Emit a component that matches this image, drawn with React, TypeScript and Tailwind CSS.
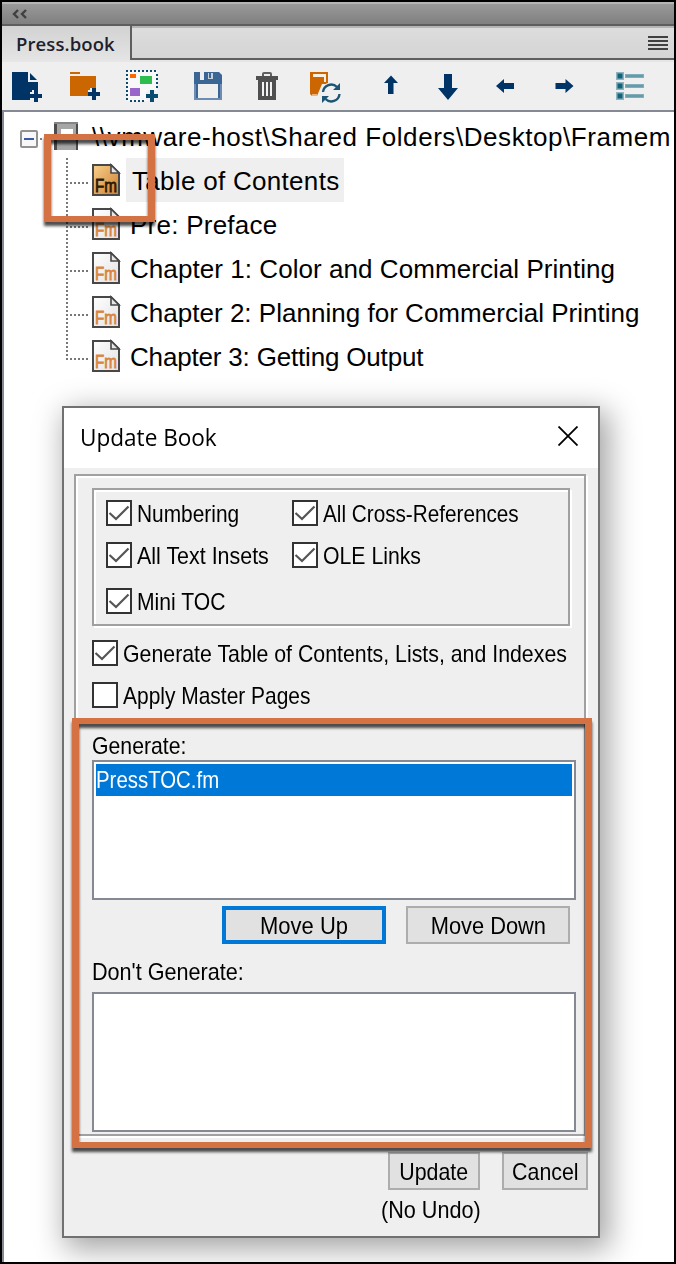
import { useState } from 'react';
import type { ReactNode } from 'react';
import clsx from 'clsx';

const chapters = [
  { title: 'Table of Contents', spacing: 'tracking-[0.3px]', selected: true },
  { title: 'Pre: Preface', spacing: 'tracking-[0.25px]' },
  { title: 'Chapter 1: Color and Commercial Printing', spacing: 'tracking-[0.06px]' },
  { title: 'Chapter 2: Planning for Commercial Printing', spacing: 'tracking-[0.02px]' },
  { title: 'Chapter 3: Getting Output', spacing: 'tracking-[-0.18px]' },
];

// Slots share one coordinate system, x is where the slot starts in the toolbar
function Tool({ x, width, children }: { x: number; width: number; children: ReactNode }) {
  return (
    <svg className="shrink-0" width={width} height={48} viewBox={`${x} 62 ${width} 48`}>
      {children}
    </svg>
  );
}

function Plus({ x, y, color }: { x: number; y: number; color: string }) {
  const d = `M${x - 6} ${y}h12M${x} ${y - 6}v12`;
  return (
    <>
      <path d={d} stroke="#efefef" strokeWidth="8" />
      <path d={d} stroke={color} strokeWidth="4" />
    </>
  );
}

function Toolbar() {
  return (
    <div className="flex h-12 bg-[#efefef]">
      <Tool x={4} width={52}>
        <path d="M12 72h16v10h10v18H12z" fill="#003366" />
        <path d="M30 73l7 7h-7z" fill="#003366" />
        <Plus x={36} y={96} color="#003366" />
      </Tool>
      <Tool x={56} width={57}>
        <path d="M70 72h10v2H70zM70 76h26v20H70z" fill="#cc6600" />
        <Plus x={94} y={94} color="#003366" />
      </Tool>
      <Tool x={113} width={63}>
        <rect x="127" y="71" width="30" height="30" fill="#f8f8f8" />
        <path d="M126 71h32M127 74v28M157 74v14M130 101h14" stroke="#0b4a70" strokeWidth="2" strokeDasharray="2 2" />
        <path d="M130 74h6v4h-6z" fill="#ff6600" />
        <path d="M140 76h12v8h-12z" fill="#2dbd4e" />
        <path d="M130 88h10v8h-10z" fill="#9966cc" />
        <Plus x={152} y={96} color="#0b4a70" />
      </Tool>
      <Tool x={176} width={63}>
        <path d="M194 72h25l3 3v25h-28z" fill="#3b6595" />
        <path d="M200 72h4v8h-4z" fill="#efefef" />
        <path d="M208 73h5v6h-5z" fill="#c5d0dd" />
        <path d="M209 73h2v5h-2z" fill="#3b6595" />
        <path d="M198 84h20v14h-20z" fill="#efefef" />
        <path d="M195 84v15h26V84" fill="none" stroke="#6c8cb1" strokeWidth="2" />
      </Tool>
      <Tool x={239} width={54}>
        <path d="M256 76h22v4h-2v20h-18V80h-2z" fill="#505050" />
        <path d="M263 76v-2q0-1 1-1h6q1 0 1 1v2" fill="none" stroke="#606060" strokeWidth="2" />
        <path d="M263 82v14M267 82v14M271 82v14" stroke="#f3f3f3" strokeWidth="2" />
      </Tool>
      <Tool x={293} width={57}>
        <path d="M310 72h18v12h-6l-5 12h-5l-2-2z" fill="#cc6600" />
        <path d="M313 74h13v8h-2v-5h-11z" fill="#f8efe5" />
        <path d="M312 94h5v2h-5z" fill="#eeb27a" />
        <circle cx="331" cy="93" r="10.500" fill="#efefef" />
        <path d="M323 92a8.200 8.200 0 0 1 14-5M339.500 94a8.200 8.200 0 0 1-14 5" fill="none" stroke="#1c5674" strokeWidth="2.400" />
        <path d="M340 83v7h-7zM322 103v-7h7z" fill="#1c5674" />
      </Tool>
      <Tool x={350} width={70}>
        <path d="M391 75.500l7 7.500h-4.500v11h-5.500v-11h-4z" fill="#003366" />
      </Tool>
      <Tool x={420} width={58}>
        <path d="M444 74h8v14h6l-10 12-10-12h6z" fill="#003366" />
      </Tool>
      <Tool x={478} width={57}>
        <path d="M496 86l8-7v4h10v6h-10v4z" fill="#003366" />
      </Tool>
      <Tool x={535} width={60}>
        <path d="M573.500 86l-8-7v4h-10v6h10v4z" fill="#003366" />
      </Tool>
      <Tool x={595} width={77}>
        <path d="M616 72h8v8h-8zM616 82h8v8h-8zM616 92h8v8h-8z" fill="#8db3bf" />
        <path d="M617.500 73.500h5v5h-5zM617.500 83.500h5v5h-5zM617.500 93.500h5v5h-5z" fill="#13627a" />
        <path d="M625 76h19M625 86h19M625 96h19" stroke="#7fadb9" strokeWidth="4" />
        <path d="M626 76h17M626 86h17M626 96h17" stroke="#639baa" strokeWidth="2" />
      </Tool>
    </div>
  );
}

function FmIcon({ active }: { active?: boolean }) {
  return (
    <svg className="shrink-0 overflow-visible" width="28" height="32" viewBox="0 0 28 32">
      <defs>
        <linearGradient id="page" x1="0" y1="0" x2="1" y2="1">
          <stop offset="0" stopColor="#ffffff" />
          <stop offset="1" stopColor="#e2e2e2" />
        </linearGradient>
        <linearGradient id="page-active" x1="0" y1="0" x2="1" y2="1">
          <stop offset="0" stopColor="#f8d08c" />
          <stop offset="1" stopColor="#cf7f30" />
        </linearGradient>
      </defs>
      <path d="M1 1h18l8 8v22H1z" fill={active ? 'url(#page-active)' : 'url(#page)'} stroke="#484848" strokeWidth="2" />
      <path d="M19 1v8h8z" fill="#e6e6e6" stroke="#484848" strokeWidth="1.600" />
      <text
        x="3"
        y="27.500"
        textLength="22"
        lengthAdjust="spacingAndGlyphs"
        strokeWidth="0.8"
        className={clsx(
          "font-['Liberation_Sans',sans-serif] text-[18px]",
          active ? 'fill-[#2a1808] stroke-[#2a1808]' : 'fill-[#d98440] stroke-[#d98440]',
        )}
      >
        Fm
      </text>
    </svg>
  );
}

function BookTree() {
  return (
    <div className="overflow-hidden pt-0.5 font-['Liberation_Sans',Arial,sans-serif] text-[26px] leading-[46px] whitespace-nowrap text-black">
      <div className="flex h-11 items-start pl-4">
        <svg className="shrink-0" width="72" height="44" viewBox="20 114 72 44">
          <rect x="21" y="131" width="16" height="16" rx="1" fill="#f8f8f8" stroke="#929292" strokeWidth="2" />
          <path d="M24 139h10" stroke="#3b5aa5" strokeWidth="2" />
          <path d="M40 139h4" stroke="#808080" strokeWidth="2" strokeDasharray="2 2" />
          <rect x="54" y="122" width="24" height="28" fill="#a6a6a6" />
          <path d="M54 122h24v2H54z" fill="#858585" />
          <path d="M54 124h3v26h-3zM76 124h2v26h-2z" fill="#4c4c4c" />
          <path d="M61 129h12v10H61z" fill="#ffffff" />
        </svg>
        <span className="tracking-[0.56px]">{'\\\\vmware-host\\Shared Folders\\Desktop\\Framem'}</span>
      </div>
      {chapters.map((chapter, i) => (
        <div key={chapter.title} className="flex h-11 items-center pl-[62px]">
          <svg className="shrink-0" width="26" height="44" viewBox="66 158 26 44">
            <path
              d={i === chapters.length - 1 ? 'M67 158v26' : 'M67 158v44'}
              stroke="#777777"
              strokeWidth="2"
              strokeDasharray="2 2"
            />
            <path d="M70 183h18" stroke="#777777" strokeWidth="2" strokeDasharray="2 2" />
          </svg>
          <FmIcon active={chapter.selected} />
          <span
            className={clsx(
              'ml-1.5 h-11',
              chapter.spacing,
              chapter.selected ? 'w-[218px] bg-[#efefef] pl-1.5' : 'pl-1',
            )}
          >
            {chapter.title}
          </span>
        </div>
      ))}
    </div>
  );
}

function Label({ children, className }: { children: ReactNode; className: string }) {
  return (
    <span className={clsx('block h-[26px] origin-left text-2xl leading-[28px] whitespace-nowrap', className)}>
      {children}
    </span>
  );
}

function Check({ label, scale, initial = true }: { label: string; scale: string; initial?: boolean }) {
  const [checked, setChecked] = useState(initial);
  return (
    <button type="button" className="flex h-[26px] items-center gap-[5px]" onClick={() => setChecked(!checked)}>
      <span className="flex size-[26px] shrink-0 border-2 border-[#333333] bg-white">
        {checked && (
          <svg width="22" height="22" viewBox="0 0 22 22">
            <path d="M1.500 11l6.500 6L20.500 4.500" fill="none" stroke="#555555" strokeWidth="2.200" />
          </svg>
        )}
      </span>
      <Label className={scale}>{label}</Label>
    </button>
  );
}

function PushButton({ label, scale, className }: { label: string; scale: string; className: string }) {
  return (
    <button type="button" className={clsx('flex h-[38px] items-center justify-center bg-[#e1e1e1]', className)}>
      <span className={clsx('block h-[26px] text-2xl leading-[28px] whitespace-nowrap', scale)}>{label}</span>
    </button>
  );
}

function UpdateDialog() {
  return (
    <div className="absolute top-[404px] left-[60px] h-[832px] w-[538px] border-2 border-[#717171] bg-[#efefef] font-['Liberation_Sans',Arial,sans-serif] text-black shadow-[6px_8px_28px_3px_rgba(0,0,0,0.36)]">
      <div className="flex h-[60px] items-center justify-between bg-white pr-5 pl-4">
        <h2 className="h-[30px] origin-left scale-x-[.94] font-['Open_Sans','Noto_Sans',sans-serif] text-2xl leading-[28px]">
          Update Book
        </h2>
        <svg className="mb-1" width="20" height="20" viewBox="0 0 20 20">
          <path d="M0.500 0.500l19 19M19.500 0.500l-19 19" stroke="#000000" strokeWidth="1.800" />
        </svg>
      </div>

      {/* Etched group holding all options */}
      <div className="mt-1.5 ml-2.5 h-[662px] w-[512px] border-2 border-[#a0a0a0] px-4 pt-3 shadow-[2px_2px_0_#fff,inset_2px_2px_0_#fff]">
        <div className="grid h-[138px] w-[478px] grid-cols-[186px_1fr] grid-rows-[42px_46px_26px] items-start border-2 border-[#a0a0a0] pt-2.5 pl-3 shadow-[2px_2px_0_#fff,inset_2px_2px_0_#fff]">
          <Check label="Numbering" scale="scale-x-[.87]" />
          <Check label="All Cross-References" scale="scale-x-[.863]" />
          <Check label="All Text Insets" scale="scale-x-[.893]" />
          <Check label="OLE Links" scale="scale-x-[.885]" />
          <Check label="Mini TOC" scale="scale-x-[.88]" />
        </div>
        <div className="mt-3.5 flex h-[68px] flex-col gap-4">
          <Check label="Generate Table of Contents, Lists, and Indexes" scale="scale-x-[.888]" />
          <Check label="Apply Master Pages" scale="scale-x-[.873]" initial={false} />
        </div>

        <Label className="mt-6 scale-x-[.885]">Generate:</Label>
        <div className="mt-0.5 h-[140px] w-[484px] border-2 border-[#858994] bg-white p-0.5">
          <div className="h-8 bg-[#0078d7] pt-0.5 text-white">
            <Label className="scale-x-[.85]">PressTOC.fm</Label>
          </div>
        </div>
        <div className="mt-1.5 flex w-[478px] justify-end gap-5">
          <PushButton label="Move Up" scale="scale-x-[.915]" className="w-[164px] border-4 border-[#0078d7]" />
          <PushButton label="Move Down" scale="scale-x-[.91]" className="w-[164px] border-2 border-[#adadad]" />
        </div>
        <Label className="mt-3.5 scale-x-[.9]">Don&apos;t Generate:</Label>
        <div className="mt-2 h-[140px] w-[484px] border-2 border-[#858994] bg-white" />
      </div>

      <div className="mt-4 flex justify-end gap-[22px] pr-2.5">
        <PushButton label="Update" scale="scale-x-[.89]" className="w-[92px] border-2 border-[#adadad]" />
        <PushButton label="Cancel" scale="scale-x-[.89]" className="w-[86px] border-2 border-[#adadad]" />
      </div>
      <Label className="mt-1.5 ml-[317px] scale-x-[.9]">(No Undo)</Label>
    </div>
  );
}

export default function App() {
  return (
    <div className="relative h-[1264px] w-[676px] overflow-hidden border-2 border-black bg-white">
      {/* Collapse strip */}
      <div className="flex h-6 items-center border-t-2 border-b-2 border-t-[#b5b5b5] border-b-[#5e5e5e] bg-linear-to-b from-[#999999] to-[#808080] pl-2.5">
        <svg width="16" height="10" viewBox="0 0 16 10">
          <path d="M6 1L2 5l4 4M14 1l-4 4 4 4" fill="none" stroke="#404040" strokeWidth="2.400" />
        </svg>
      </div>

      {/* Tab row */}
      <div className="flex h-9 bg-[#e6e6e6]">
        <div className="h-[34px] w-[130px] border-r-2 border-[#5e5e5e] bg-linear-to-b from-[#d2d2d2] to-[#e4e4e4] pl-3.5 font-['Open_Sans','Noto_Sans',sans-serif] text-[18.500px] leading-[35px] font-semibold tracking-[0.1px] whitespace-nowrap text-[#1f1f2c]">
          Press.book
        </div>
        <div className="flex h-[34px] flex-1 items-center justify-end border-t-2 border-b-2 border-t-[#b5b5b5] border-b-[#5e5e5e] bg-linear-to-b from-[#dddddd] to-[#d4d4d4] pr-1.5">
          <svg width="20" height="14" viewBox="0 0 20 14">
            <path d="M0 1h20M0 5h20M0 9h20M0 13h20" stroke="#404040" strokeWidth="2" />
          </svg>
        </div>
      </div>

      <div className="h-12 bg-[#efefef] pl-0.5">
        <Toolbar />
      </div>

      <div className="h-[1152px] border-t-2 border-l-2 border-[#858994]">
        <BookTree />
      </div>

      <UpdateDialog />

      {/* Callout frames */}
      <div className="pointer-events-none absolute top-[132px] left-[42px] h-[88px] w-[111px] border-[6px] border-x-[7px] border-[#d47243] drop-shadow-[0_4px_1.500px_rgba(0,0,0,0.700)]" />
      <div className="pointer-events-none absolute top-[716px] left-[70px] h-[430px] w-[520px] border-[6px] border-x-[7px] border-[#d47243] drop-shadow-[0_4px_1.500px_rgba(0,0,0,0.700)]" />
    </div>
  );
}
